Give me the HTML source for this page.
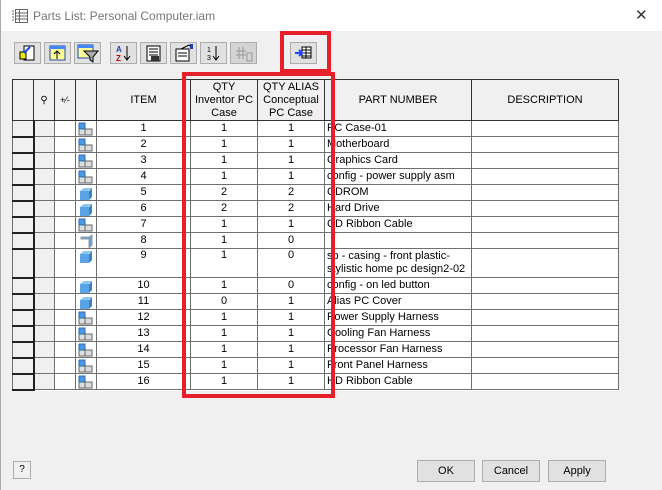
<!DOCTYPE html>
<html><head><meta charset="utf-8"><style>
*{margin:0;padding:0;box-sizing:border-box}
body{width:662px;height:490px;background:#f0f0f0;font-family:"Liberation Sans",sans-serif;font-size:11px;color:#000;position:relative;overflow:hidden;border-left:1px solid #aaa}
.title{position:absolute;left:0;top:0;width:662px;height:31px;background:#fff}
.ttl{position:absolute;left:32px;top:9px;font-size:12px;color:#777}
.close{position:absolute;left:634px;top:6px;font-size:15px;color:#333}
.tb{position:absolute;top:42px;width:27px;height:22px;background:#e1e1e1;border:1px solid #adadad}
.tb.dis{background:#d4d4d4}
table{position:absolute;left:11px;top:79px;border-collapse:collapse;table-layout:fixed;background:#fff}
tr{height:16px}
td,th{border:1px solid #707070;height:16px;text-align:center;font-weight:normal;padding:0;line-height:13px;overflow:hidden;white-space:nowrap;font-size:11px}
td svg{display:block;margin:0 auto}
th{background:#f0f0f0;height:41px;border:1px solid #333;line-height:13px}
td.a{background:#f0f0f0;border-right:2px solid #222;border-bottom:2px solid #222}
td.b{background:#f0f0f0}
td.l{text-align:left;padding-left:2px}
.red{position:absolute;border:4px solid #e5202a}
.btn{position:absolute;top:460px;width:58px;height:22px;background:#e1e1e1;border:1px solid #adadad;text-align:center;line-height:20px;font-size:11px}
</style></head><body>
<div class="title"><svg style="position:absolute;left:11px;top:9px" width="16" height="14"><g stroke="#666" fill="none"><rect x="3.5" y="0.5" width="12" height="13"/><path d="M3 4h13M3 7h13M3 10h13M7.5 0v14"/><path d="M0 2h2M0 5h2M0 8h2M0 11h2"/></g></svg><span class="ttl">Parts List: Personal Computer.iam</span><span class="close">✕</span></div>
<div class="tb" style="left:13px"><svg width="25" height="20"><rect x="9" y="3" width="10" height="14" fill="#fff" stroke="#000"/><rect x="5" y="9" width="6" height="7" fill="#ee0" stroke="#000"/><path d="M9 10l6-6" stroke="#24f" stroke-width="2"/></svg></div>
<div class="tb" style="left:43px"><svg width="25" height="20"><rect x="5" y="3" width="15" height="14" fill="#ff9" stroke="#24a"/><rect x="5" y="3" width="15" height="3" fill="#48f"/><path d="M12 16V8M9 11l3-3 3 3" stroke="#000" fill="none"/></svg></div>
<div class="tb" style="left:73px"><svg width="25" height="20"><rect x="3" y="2" width="15" height="13" fill="#ff9" stroke="#24a"/><rect x="3" y="2" width="15" height="3" fill="#48f"/><path d="M9 8h14l-5 6v5l-3-2v-3z" fill="#aaa" stroke="#000"/></svg></div>
<div class="tb" style="left:109px"><svg width="25" height="20"><text x="5" y="9" font-size="8" fill="#24a" font-weight="bold">A</text><text x="5" y="18" font-size="8" fill="#c00" font-weight="bold">Z</text><path d="M16 3v13M13 13l3 4 3-4" stroke="#000" fill="none"/></svg></div>
<div class="tb" style="left:139px"><svg width="25" height="20"><rect x="6" y="3" width="13" height="15" fill="#fff" stroke="#000"/><path d="M8 6h9M8 9h9M8 12h9" stroke="#000"/><rect x="10" y="13" width="8" height="5" fill="#333"/></svg></div>
<div class="tb" style="left:169px"><svg width="25" height="20"><rect x="5" y="6" width="13" height="12" fill="#fff" stroke="#000"/><path d="M7 10h9M7 13h9" stroke="#000"/><path d="M10 6l8-4 3 3" stroke="#000" fill="none"/><rect x="19" y="1" width="3" height="5" fill="#24a"/></svg></div>
<div class="tb" style="left:199px"><svg width="25" height="20"><text x="6" y="9" font-size="7">1</text><text x="6" y="17" font-size="7">3</text><path d="M15 3v13M12 13l3 4 3-4" stroke="#000" fill="none"/></svg></div>
<div class="tb dis" style="left:229px"><svg width="25" height="20"><path d="M8 4v12M12 4v12M5 8h10M5 12h10M16 10h5v8h-5z" stroke="#999" fill="none"/></svg></div>
<div class="tb" style="left:289px"><svg width="25" height="20"><rect x="11" y="4" width="9" height="11" fill="#fff" stroke="#000"/><path d="M11 7h9M11 10h9M11 13h9M15 4v11" stroke="#000"/><path d="M4 10h7M8 7l3 3-3 3" stroke="#24f" stroke-width="2" fill="none"/></svg></div>

<svg width="0" height="0" style="position:absolute"><defs>
<g id="asm"><rect x="1" y="7" width="6" height="6" fill="#ddd" stroke="#666"/><rect x="7" y="7" width="7" height="6" fill="#ddd" stroke="#666"/><rect x="1" y="1" width="6" height="6" fill="#4a9ae0" stroke="#2a6cb0"/></g>
<g id="prt"><path d="M2 5l4-3h8l-4 3z" fill="#8cc4f0"/><rect x="2" y="5" width="9" height="9" fill="#5aa4e6"/><path d="M11 5l3-3v9l-3 3z" fill="#3a84c6"/></g>
<g id="sm"><path d="M3 3h8l3 -2v10l-3 3V5H3z" fill="#5aa4e6" stroke="#999"/></g>
</defs></svg>

<table>
<colgroup><col style="width:21px"><col style="width:21px"><col style="width:21px"><col style="width:21px"><col style="width:94px"><col style="width:67px"><col style="width:67px"><col style="width:147px"><col style="width:147px"></colgroup>
<tr style="height:41px"><th></th><th style="font-size:10px">⚲</th><th style="font-size:9px">+⁄-</th><th></th><th>ITEM</th><th>QTY<br>Inventor PC<br>Case</th><th>QTY ALIAS<br>Conceptual<br>PC Case</th><th>PART NUMBER</th><th>DESCRIPTION</th></tr>
<tr><td class="a"></td><td class="b"></td><td></td><td><svg width="16" height="14"><use href="#asm"/></svg></td><td>1</td><td>1</td><td>1</td><td class="l">PC Case-01</td><td></td></tr>
<tr><td class="a"></td><td class="b"></td><td></td><td><svg width="16" height="14"><use href="#asm"/></svg></td><td>2</td><td>1</td><td>1</td><td class="l">Motherboard</td><td></td></tr>
<tr><td class="a"></td><td class="b"></td><td></td><td><svg width="16" height="14"><use href="#asm"/></svg></td><td>3</td><td>1</td><td>1</td><td class="l">Graphics Card</td><td></td></tr>
<tr><td class="a"></td><td class="b"></td><td></td><td><svg width="16" height="14"><use href="#asm"/></svg></td><td>4</td><td>1</td><td>1</td><td class="l">config - power supply asm</td><td></td></tr>
<tr><td class="a"></td><td class="b"></td><td></td><td><svg width="16" height="14"><use href="#prt"/></svg></td><td>5</td><td>2</td><td>2</td><td class="l">CDROM</td><td></td></tr>
<tr><td class="a"></td><td class="b"></td><td></td><td><svg width="16" height="14"><use href="#prt"/></svg></td><td>6</td><td>2</td><td>2</td><td class="l">Hard Drive</td><td></td></tr>
<tr><td class="a"></td><td class="b"></td><td></td><td><svg width="16" height="14"><use href="#asm"/></svg></td><td>7</td><td>1</td><td>1</td><td class="l">CD Ribbon Cable</td><td></td></tr>
<tr><td class="a"></td><td class="b"></td><td></td><td><svg width="16" height="14"><use href="#sm"/></svg></td><td>8</td><td>1</td><td>0</td><td class="l"></td><td></td></tr>
<tr style="height:29px"><td class="a" style="height:29px"></td><td class="b"></td><td></td><td style="vertical-align:top"><svg width="16" height="14"><use href="#prt"/></svg></td><td style="vertical-align:top">9</td><td style="vertical-align:top">1</td><td style="vertical-align:top">0</td><td class="l" style="white-space:normal;line-height:13px">sp - casing - front plastic-stylistic home pc design2-02</td><td></td></tr>
<tr><td class="a"></td><td class="b"></td><td></td><td><svg width="16" height="14"><use href="#prt"/></svg></td><td>10</td><td>1</td><td>0</td><td class="l">config - on led button</td><td></td></tr>
<tr><td class="a"></td><td class="b"></td><td></td><td><svg width="16" height="14"><use href="#prt"/></svg></td><td>11</td><td>0</td><td>1</td><td class="l">Alias PC Cover</td><td></td></tr>
<tr><td class="a"></td><td class="b"></td><td></td><td><svg width="16" height="14"><use href="#asm"/></svg></td><td>12</td><td>1</td><td>1</td><td class="l">Power Supply Harness</td><td></td></tr>
<tr><td class="a"></td><td class="b"></td><td></td><td><svg width="16" height="14"><use href="#asm"/></svg></td><td>13</td><td>1</td><td>1</td><td class="l">Cooling Fan Harness</td><td></td></tr>
<tr><td class="a"></td><td class="b"></td><td></td><td><svg width="16" height="14"><use href="#asm"/></svg></td><td>14</td><td>1</td><td>1</td><td class="l">Processor Fan Harness</td><td></td></tr>
<tr><td class="a"></td><td class="b"></td><td></td><td><svg width="16" height="14"><use href="#asm"/></svg></td><td>15</td><td>1</td><td>1</td><td class="l">Front Panel Harness</td><td></td></tr>
<tr><td class="a"></td><td class="b"></td><td></td><td><svg width="16" height="14"><use href="#asm"/></svg></td><td>16</td><td>1</td><td>1</td><td class="l">HD Ribbon Cable</td><td></td></tr>
</table>

<div class="red" style="left:279px;top:31px;width:51px;height:42px"></div>
<div class="red" style="left:181px;top:72px;width:153px;height:326px"></div>

<div class="tb" style="left:12px;top:461px;width:18px;height:18px;background:#f0f0f0;font-size:10px;text-align:center;line-height:15px">?</div>
<div class="btn" style="left:416px;width:58px">OK</div>
<div class="btn" style="left:481px;width:58px">Cancel</div>
<div class="btn" style="left:547px;width:58px">Apply</div>
</body></html>
